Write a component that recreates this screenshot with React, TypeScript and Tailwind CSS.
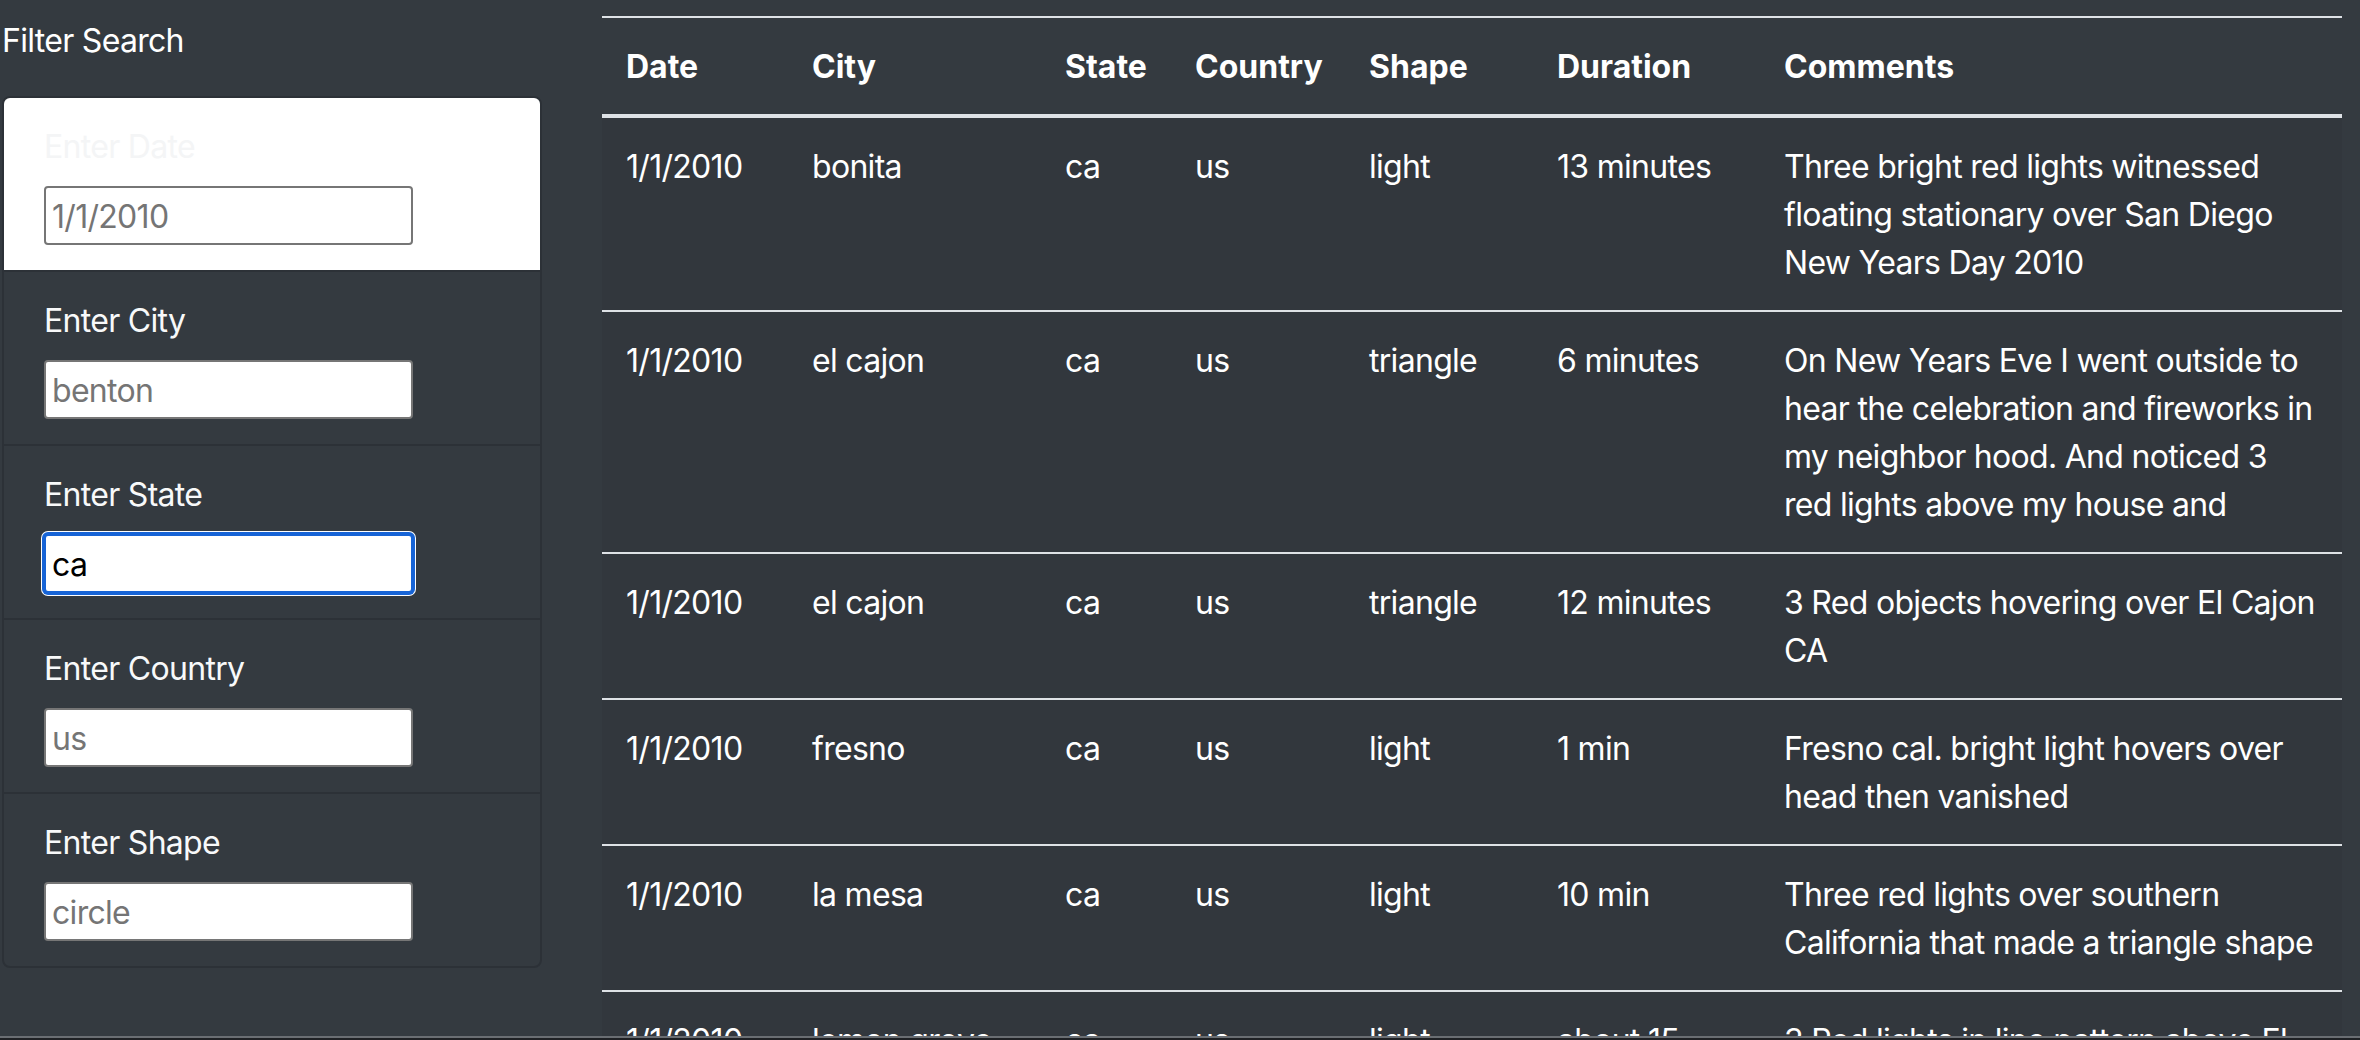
import React from "react"

type Sighting = {
  date:     string
  city:     string
  state:    string
  country:  string
  shape:    string
  duration: string
  comments: string
}

const rows: Sighting[] = [
  { date: "1/1/2010", city: "bonita",      state: "ca", country: "us", shape: "light",    duration: "13 minutes",       comments: "Three bright red lights witnessed floating stationary over San Diego New Years Day 2010" },
  { date: "1/1/2010", city: "el cajon",    state: "ca", country: "us", shape: "triangle", duration: "6 minutes",        comments: "On New Years Eve I went outside to hear the celebration and fireworks in my neighbor hood. And noticed 3 red lights above my house and" },
  { date: "1/1/2010", city: "el cajon",    state: "ca", country: "us", shape: "triangle", duration: "12 minutes",       comments: "3 Red objects hovering over El Cajon CA" },
  { date: "1/1/2010", city: "fresno",      state: "ca", country: "us", shape: "light",    duration: "1 min",            comments: "Fresno cal. bright light hovers over head then vanished" },
  { date: "1/1/2010", city: "la mesa",     state: "ca", country: "us", shape: "light",    duration: "10 min",           comments: "Three red lights over southern California that made a triangle shape" },
  { date: "1/1/2010", city: "lemon grove", state: "ca", country: "us", shape: "light",    duration: "about 15 minutes", comments: "3 Red lights in line pattern above El Cajon then faded away" },
]

const filters = [
  { label: "Enter Date",    placeholder: "1/1/2010" },
  { label: "Enter City",    placeholder: "benton" },
  { label: "Enter State",   placeholder: "ca", value: "ca", focused: true },
  { label: "Enter Country", placeholder: "us" },
  { label: "Enter Shape",   placeholder: "circle" },
]

const font = { fontFamily: "Inter, 'Liberation Sans', sans-serif" }

function FilterItem({ label, placeholder, value, focused, first }: {
  label:       string
  placeholder: string
  value?:      string
  focused?:    boolean
  first?:      boolean
}) {
  return (
    <li className={[
      "px-[40px] pt-[24px] pb-[25px]",
      first ? "bg-white" : "border-t-2 border-[#2c3137]",
    ].join(" ")}>
      <label className={[
        "block text-[32px] leading-[48px] mt-[1px] mb-[15px] tracking-[-0.7px]",
        first ? "text-[#f4f5f6]" : "text-[#f8f9fa]",
      ].join(" ")}>
        {label}
      </label>
      <input
        type="text"
        placeholder={placeholder}
        defaultValue={value}
        className={[
          "block w-[369px] h-[59px] bg-white rounded-[4px] px-[6px] pt-[2px] text-[32px] tracking-[-0.7px] text-black placeholder:text-[#757575] outline-none",
          focused
            ? "border-2 border-[#1764d6] shadow-[0_0_0_2px_#1764d6,0_0_0_3px_#ffffff]"
            : "border-2 border-[#767676]",
        ].join(" ")}
        style={font}
      />
    </li>
  )
}

export default function App() {
  return (
    <div className="h-[1040px] w-[2360px] flex flex-col overflow-hidden bg-[#343a40] text-white" style={font}>

      {/* ── Página ─────────────────────────────────────────────── */}
      <div className="flex-1 min-h-0 overflow-hidden flex">

        {/* Filtros */}
        <aside className="w-[542px] pl-[2px] flex-shrink-0">
          <h5 className="pt-[17px] mb-[31px] text-[32px] leading-[48px] tracking-[-0.7px] text-white">Filter Search</h5>
          <ul className="rounded-[8px] overflow-hidden border-2 border-[#2c3137]">
            {filters.map((f, i) => (
              <FilterItem key={f.label} {...f} first={i === 0} />
            ))}
          </ul>
        </aside>

        {/* Tabela */}
        <main className="ml-[60px] w-[1740px] flex-shrink-0 pt-[16px]">
          <table className="w-[1740px] table-fixed border-collapse text-[32px] leading-[48px]">
            <colgroup>
              <col className="w-[186px]" />
              <col className="w-[253px]" />
              <col className="w-[130px]" />
              <col className="w-[174px]" />
              <col className="w-[188px]" />
              <col className="w-[227px]" />
              <col className="w-[582px]" />
            </colgroup>
            <thead>
              <tr className="border-t-2 border-b-4 border-[#dee2e6]">
                {["Date", "City", "State", "Country", "Shape", "Duration", "Comments"].map(h => (
                  <th key={h} className="px-[24px] pt-[25px] pb-[23px] text-left font-bold align-bottom">{h}</th>
                ))}
              </tr>
            </thead>
            <tbody className="bg-[#32373d] tracking-[-0.7px]">
              {rows.map((r, i) => (
                <tr key={i} className="border-t-2 border-[#dee2e6]">
                  <td className="px-[24px] pt-[25px] pb-[23px] align-top">{r.date}</td>
                  <td className="px-[24px] pt-[25px] pb-[23px] align-top">{r.city}</td>
                  <td className="px-[24px] pt-[25px] pb-[23px] align-top">{r.state}</td>
                  <td className="px-[24px] pt-[25px] pb-[23px] align-top">{r.country}</td>
                  <td className="px-[24px] pt-[25px] pb-[23px] align-top">{r.shape}</td>
                  <td className="px-[24px] pt-[25px] pb-[23px] align-top">{r.duration}</td>
                  <td className="px-[24px] pt-[25px] pb-[23px] align-top">{r.comments}</td>
                </tr>
              ))}
            </tbody>
          </table>
        </main>
      </div>

      {/* ── Borda inferior da janela ───────────────────────────── */}
      <div className="h-[2px] bg-[#6a6e73] flex-shrink-0" />
      <div className="h-[2px] bg-[#1f2125] flex-shrink-0" />
    </div>
  )
}
